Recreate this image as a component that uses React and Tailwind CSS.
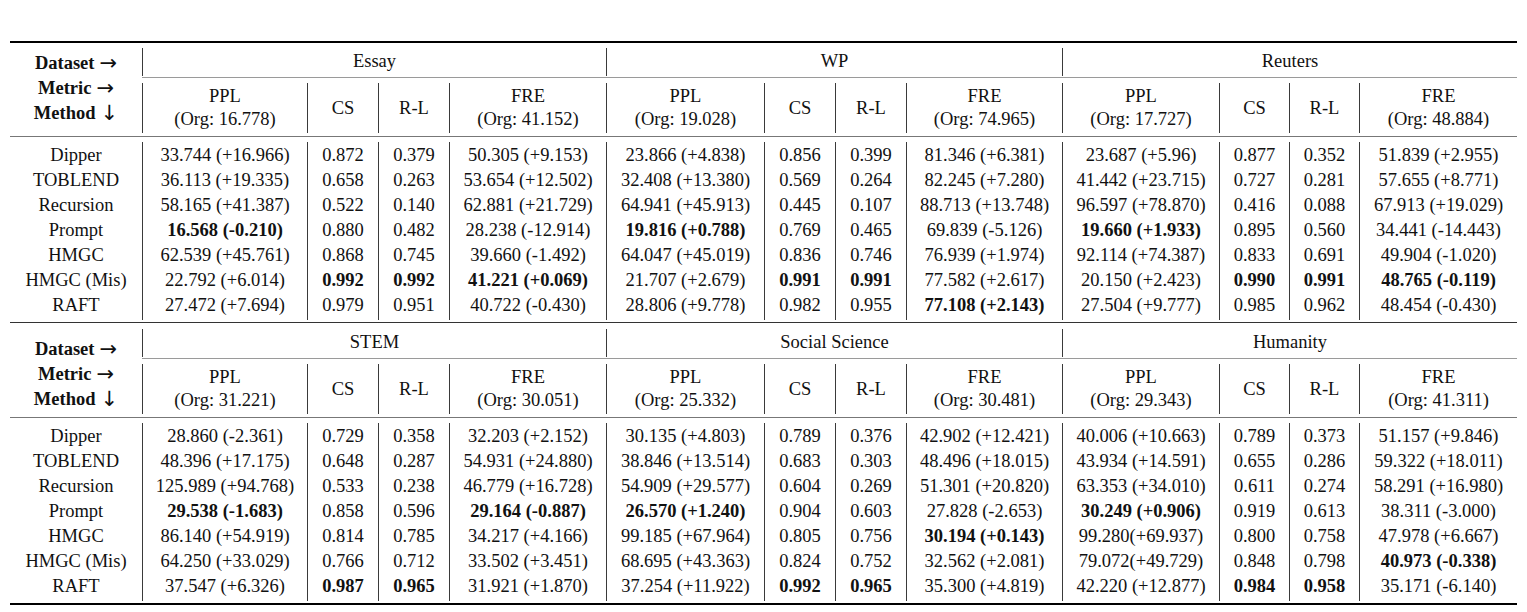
const B = (s) => ({ t: s, b: true });

const blocks = [
  {
    pad: "pt-[3px]",
    groups: [
      { name: "Essay", ppl: "16.778", fre: "41.152" },
      { name: "WP", ppl: "19.028", fre: "74.965" },
      { name: "Reuters", ppl: "17.727", fre: "48.884" },
    ],
    rows: [
      ["Dipper", "33.744 (+16.966)", "0.872", "0.379", "50.305 (+9.153)", "23.866 (+4.838)", "0.856", "0.399", "81.346 (+6.381)", "23.687 (+5.96)", "0.877", "0.352", "51.839 (+2.955)"],
      ["TOBLEND", "36.113 (+19.335)", "0.658", "0.263", "53.654 (+12.502)", "32.408 (+13.380)", "0.569", "0.264", "82.245 (+7.280)", "41.442 (+23.715)", "0.727", "0.281", "57.655 (+8.771)"],
      ["Recursion", "58.165 (+41.387)", "0.522", "0.140", "62.881 (+21.729)", "64.941 (+45.913)", "0.445", "0.107", "88.713 (+13.748)", "96.597 (+78.870)", "0.416", "0.088", "67.913 (+19.029)"],
      ["Prompt", B("16.568 (-0.210)"), "0.880", "0.482", "28.238 (-12.914)", B("19.816 (+0.788)"), "0.769", "0.465", "69.839 (-5.126)", B("19.660 (+1.933)"), "0.895", "0.560", "34.441 (-14.443)"],
      ["HMGC", "62.539 (+45.761)", "0.868", "0.745", "39.660 (-1.492)", "64.047 (+45.019)", "0.836", "0.746", "76.939 (+1.974)", "92.114 (+74.387)", "0.833", "0.691", "49.904 (-1.020)"],
      ["HMGC (Mis)", "22.792 (+6.014)", B("0.992"), B("0.992"), B("41.221 (+0.069)"), "21.707 (+2.679)", B("0.991"), B("0.991"), "77.582 (+2.617)", "20.150 (+2.423)", B("0.990"), B("0.991"), B("48.765 (-0.119)")],
      ["RAFT", "27.472 (+7.694)", "0.979", "0.951", "40.722 (-0.430)", "28.806 (+9.778)", "0.982", "0.955", B("77.108 (+2.143)"), "27.504 (+9.777)", "0.985", "0.962", "48.454 (-0.430)"],
    ],
  },
  {
    pad: "pt-[8px]",
    groups: [
      { name: "STEM", ppl: "31.221", fre: "30.051" },
      { name: "Social Science", ppl: "25.332", fre: "30.481" },
      { name: "Humanity", ppl: "29.343", fre: "41.311" },
    ],
    rows: [
      ["Dipper", "28.860 (-2.361)", "0.729", "0.358", "32.203 (+2.152)", "30.135 (+4.803)", "0.789", "0.376", "42.902 (+12.421)", "40.006 (+10.663)", "0.789", "0.373", "51.157 (+9.846)"],
      ["TOBLEND", "48.396 (+17.175)", "0.648", "0.287", "54.931 (+24.880)", "38.846 (+13.514)", "0.683", "0.303", "48.496 (+18.015)", "43.934 (+14.591)", "0.655", "0.286", "59.322 (+18.011)"],
      ["Recursion", "125.989 (+94.768)", "0.533", "0.238", "46.779 (+16.728)", "54.909 (+29.577)", "0.604", "0.269", "51.301 (+20.820)", "63.353 (+34.010)", "0.611", "0.274", "58.291 (+16.980)"],
      ["Prompt", B("29.538 (-1.683)"), "0.858", "0.596", B("29.164 (-0.887)"), B("26.570 (+1.240)"), "0.904", "0.603", "27.828 (-2.653)", B("30.249 (+0.906)"), "0.919", "0.613", "38.311 (-3.000)"],
      ["HMGC", "86.140 (+54.919)", "0.814", "0.785", "34.217 (+4.166)", "99.185 (+67.964)", "0.805", "0.756", B("30.194 (+0.143)"), "99.280(+69.937)", "0.800", "0.758", "47.978 (+6.667)"],
      ["HMGC (Mis)", "64.250 (+33.029)", "0.766", "0.712", "33.502 (+3.451)", "68.695 (+43.363)", "0.824", "0.752", "32.562 (+2.081)", "79.072(+49.729)", "0.848", "0.798", B("40.973 (-0.338)")],
      ["RAFT", "37.547 (+6.326)", B("0.987"), B("0.965"), "31.921 (+1.870)", "37.254 (+11.922)", B("0.992"), B("0.965"), "35.300 (+4.819)", "42.220 (+12.877)", B("0.984"), B("0.958"), "35.171 (-6.140)"],
    ],
  },
];

const colGrid =
  "grid grid-cols-[165px_71px_71px_157px_158px_71px_71px_156px_157px_70px_70px_158px]";

const Cell = ({ v }) => {
  const bold = typeof v === "object";
  return (
    <div className={`border-l border-[#3a3a3a] flex items-center justify-center whitespace-nowrap ${bold ? "font-bold" : ""}`}>
      {bold ? v.t : v}
    </div>
  );
};

const Arrow = ({ c }) => (
  <span className="ml-[5px] font-normal font-['DejaVu_Sans',sans-serif] text-[21px] leading-none">{c}</span>
);

const Block = ({ block }) => (
  <div>
    {/* header */}
    <div className="grid grid-cols-[132px_1375px]">
      <div className={`flex flex-col items-center font-bold leading-[25px] ${block.pad}`}>
        <span className="flex items-center h-[25px]">Dataset<Arrow c="→" /></span>
        <span className="flex items-center h-[25px]">Metric<Arrow c="→" /></span>
        <span className="flex items-center h-[25px]">Method<Arrow c="↓" /></span>
      </div>
      <div className="flex flex-col">
        <div className="grid grid-cols-[464px_456px_455px] h-[25px]">
          {block.groups.map(g => (
            <div key={g.name} className="border-l border-[#3a3a3a] flex items-center justify-center">
              {g.name}
            </div>
          ))}
        </div>
        <div className="mt-[4px] h-px bg-[#9a9a9a]" />
        <div className={`${colGrid} h-[50px] mt-[5px] leading-[23px]`}>
          {block.groups.map(g => [
            <div key={g.name + "p"} className="border-l border-[#3a3a3a] flex flex-col items-center justify-center">
              <span>PPL</span>
              <span>(Org: {g.ppl})</span>
            </div>,
            <div key={g.name + "c"} className="border-l border-[#3a3a3a] flex items-center justify-center">CS</div>,
            <div key={g.name + "r"} className="border-l border-[#3a3a3a] flex items-center justify-center">R-L</div>,
            <div key={g.name + "f"} className="border-l border-[#3a3a3a] flex flex-col items-center justify-center">
              <span>FRE</span>
              <span>(Org: {g.fre})</span>
            </div>,
          ])}
        </div>
      </div>
    </div>
    <div className="mt-[3px] h-px bg-[#777]" />
    {/* data */}
    <div className="mt-[5px]">
      {block.rows.map(r => (
        <div key={r[0]} className="grid grid-cols-[132px_1375px] h-[25px]">
          <div className="flex items-center justify-center whitespace-nowrap">{r[0]}</div>
          <div className={colGrid}>
            {r.slice(1).map((v, i) => <Cell key={i} v={v} />)}
          </div>
        </div>
      ))}
    </div>
  </div>
);

export default function App() {
  return (
    <div className="w-[1527px] h-[612px] bg-white overflow-hidden px-[10px] pt-[41px] text-[18.5px] text-[#111] font-['Liberation_Serif',serif]">
      <div className="w-[1507px]">
        <div className="h-[2px] bg-black" />
        <div className="mt-[5px]">
          <Block block={blocks[0]} />
        </div>
        <div className="mt-[5px] h-px bg-[#333]" />
        <div className="mt-[6px]">
          <Block block={blocks[1]} />
        </div>
        <div className="mt-[5px] h-[2px] bg-black" />
      </div>
    </div>
  );
}
